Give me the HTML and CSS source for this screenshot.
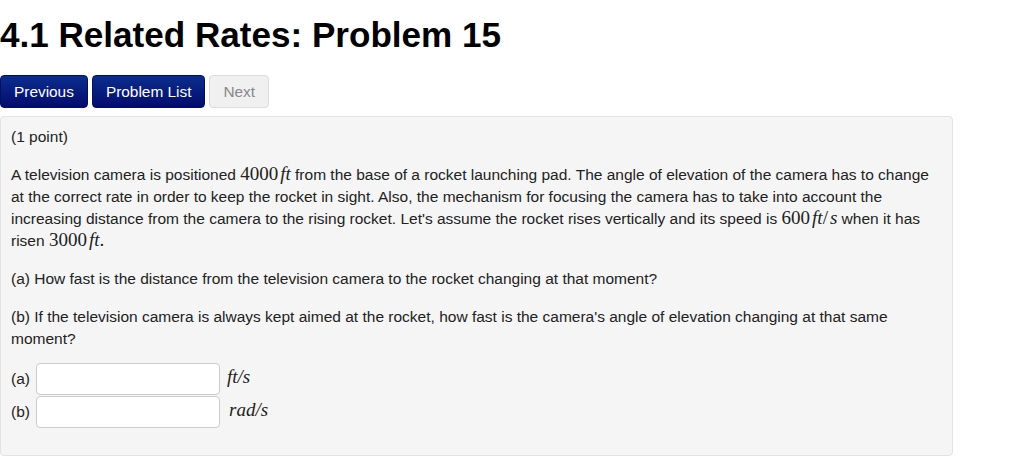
FILE: index.html
```html
<!DOCTYPE html>
<html lang="en">
<head>
    <meta charset="UTF-8">
    <meta name="viewport" content="width=device-width, initial-scale=1.0">
    <title>4.1 Related Rates: Problem 15</title>
    <link rel="stylesheet" href="styles.css">
</head>
<body>
    <h1 class="titulo">4.1 Related Rates: Problem 15</h1>
    <div class="navegacao">
        <a class="botao ativo" href="#">Previous</a>
        <a class="botao ativo" href="#">Problem List</a>
        <span class="botao desativado">Next</span>
    </div>
    <div class="problema">
        <p>(1 point)</p>
        <p>A television camera is positioned <span class="mat">4000<i>ft</i></span> from the base of a rocket launching pad. The angle of elevation of the camera has to change at the correct rate in order to keep the rocket in sight. Also, the mechanism for focusing the camera has to take into account the increasing distance from the camera to the rising rocket. Let's assume the rocket rises vertically and its speed is <span class="mat">600<i>ft</i>/<i>s</i></span> when it has risen <span class="mat">3000<i>ft</i>.</span></p>
        <p>(a) How fast is the distance from the television camera to the rocket changing at that moment?</p>
        <p class="ultimo">(b) If the television camera is always kept aimed at the rocket, how fast is the camera's angle of elevation changing at that same moment?</p>
        <div class="respostas">
            <div class="resposta">
                <label for="respA">(a)</label>
                <input type="text" id="respA" class="campo">
                <span class="unidade"><i>ft/s</i></span>
            </div>
            <div class="resposta">
                <label for="respB">(b)</label>
                <input type="text" id="respB" class="campo">
                <span class="unidade segunda"><i>rad/s</i></span>
            </div>
        </div>
    </div>
</body>
</html>
```

FILE: styles.css
```css
body {
    margin: 0;
    background-color: white;
    font-family: "Liberation Sans", Arial, Helvetica, sans-serif;
    color: #222;
}

.titulo {
    margin: 15px 0 20px 0;
    font-size: 35.1px;
    line-height: 40px;
    font-weight: bold;
    color: black;
}

.navegacao {
    display: flex;
    gap: 4px;
    margin-bottom: 8px;
}

.botao {
    display: inline-block;
    height: 33px;
    box-sizing: border-box;
    padding: 0 13px;
    line-height: 31px;
    font-size: 15.4px;
    text-decoration: none;
    border-radius: 4px;
    border: 1px solid;
}

.ativo {
    color: white;
    background: linear-gradient(#0b2d8e, #030c6e);
    border-color: #02105e;
}

.desativado {
    color: #888;
    background-color: #f0f0f0;
    border-color: #dcdcdc;
}

.problema {
    width: 953px;
    box-sizing: border-box;
    background-color: #f5f5f5;
    border: 1px solid #e3e3e3;
    border-radius: 4px;
    padding: 9px 9px 27px 10px;
    font-size: 15.5px;
    line-height: 22px;
}

.problema p {
    margin: 0 0 16px 0;
}

.problema p.ultimo {
    margin-bottom: 13px;
}

.mat {
    font-family: "Liberation Serif", "Times New Roman", serif;
    font-size: 19px;
    line-height: 1;
}

.mat i {
    margin-left: 2px;
}

.respostas {
    display: flex;
    flex-direction: column;
    gap: 1px;
}

.resposta {
    display: flex;
    align-items: center;
    gap: 7px;
}

.resposta label {
    width: 18px;
}

.campo {
    width: 184px;
    height: 32px;
    box-sizing: border-box;
    border: 1px solid #ccc;
    border-radius: 4px;
    background-color: white;
}

.unidade {
    font-family: "Liberation Serif", "Times New Roman", serif;
    font-size: 19px;
    margin-top: -4px;
}

.segunda {
    margin-left: 2px;
}
```
